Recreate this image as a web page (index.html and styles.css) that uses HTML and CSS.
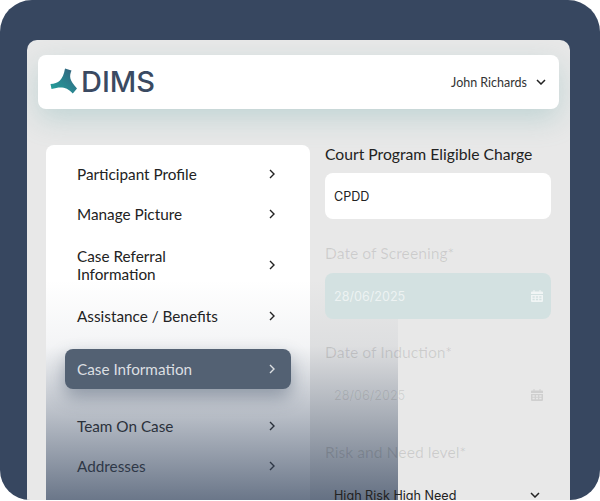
FILE: index.html
```html
<!DOCTYPE html>
<html lang="en">
<head>
<meta charset="utf-8">
<title>DIMS</title>
<link rel="stylesheet" href="styles.css">
</head>
<body>
<div class="frame">
  <div class="card">
    <header class="topbar">
      <div class="brand">
        <svg class="logo" viewBox="0 0 30 30" width="30" height="30" aria-hidden="true">
          <defs>
            <linearGradient id="lg" x1="0" y1="1" x2="1" y2="0">
              <stop offset="0" stop-color="#22a59c"/>
              <stop offset=".55" stop-color="#2b7f8d"/>
              <stop offset="1" stop-color="#375a78"/>
            </linearGradient>
          </defs>
          <path fill="url(#lg)" d="M17 1.500 L23.500 3.500 C21 10 21.500 13 29 21.500 L24.800 26.500 C18.500 19.500 12.500 19.500 3.500 22 L2.500 17 C10.500 16.500 15 13 17 1.500Z"/>
        </svg>
        <span class="wordmark">DIMS</span>
      </div>
      <div class="user">
        <span>John Richards</span>
        <svg class="chev-down" viewBox="0 0 10 6" width="10" height="6" aria-hidden="true"><path d="M1 1l4 4 4-4"/></svg>
      </div>
    </header>
    <main class="content">
      <div class="fade"></div>
      <nav class="sidebar">
        <a class="item">Participant Profile<svg class="chev" viewBox="0 0 6 10" width="6" height="10"><path d="M1 1l4 4-4 4"/></svg></a>
        <a class="item">Manage Picture<svg class="chev" viewBox="0 0 6 10" width="6" height="10"><path d="M1 1l4 4-4 4"/></svg></a>
        <a class="item tall"><span>Case Referral<br>Information</span><svg class="chev" viewBox="0 0 6 10" width="6" height="10"><path d="M1 1l4 4-4 4"/></svg></a>
        <a class="item">Assistance / Benefits<svg class="chev" viewBox="0 0 6 10" width="6" height="10"><path d="M1 1l4 4-4 4"/></svg></a>
        <a class="item active">Case Information<svg class="chev" viewBox="0 0 6 10" width="6" height="10"><path d="M1 1l4 4-4 4"/></svg></a>
        <a class="item after-active">Team On Case<svg class="chev" viewBox="0 0 6 10" width="6" height="10"><path d="M1 1l4 4-4 4"/></svg></a>
        <a class="item">Addresses<svg class="chev" viewBox="0 0 6 10" width="6" height="10"><path d="M1 1l4 4-4 4"/></svg></a>
        <a class="item">Contacts<svg class="chev" viewBox="0 0 6 10" width="6" height="10"><path d="M1 1l4 4-4 4"/></svg></a>
      </nav>
      <form class="form">
        <label class="label first">Court Program Eligible Charge</label>
        <div class="field solid">CPDD</div>
        <label class="label faded">Date of Screening*</label>
        <div class="field teal">28/06/2025
          <svg class="cal" viewBox="0 0 12 12" width="12" height="12" aria-hidden="true"><path d="M0 2.500a1 1 0 0 1 1-1h1.500V0h1v1.500h5V0h1v1.500H11a1 1 0 0 1 1 1V4H0zM0 5h12v6a1 1 0 0 1-1 1H1a1 1 0 0 1-1-1zm1.500 1.200v1.500h2.200V6.200zm3.400 0v1.500h2.200V6.200zm3.400 0v1.500h2.200V6.200zM1.500 8.800v1.500h2.200V8.800zm3.400 0v1.500h2.200V8.800zm3.400 0v1.500h2.200V8.800z" fill-rule="evenodd"/></svg>
        </div>
        <label class="label faded induction">Date of Induction*</label>
        <div class="field plain">28/06/2025
          <svg class="cal" viewBox="0 0 12 12" width="12" height="12" aria-hidden="true"><path d="M0 2.500a1 1 0 0 1 1-1h1.500V0h1v1.500h5V0h1v1.500H11a1 1 0 0 1 1 1V4H0zM0 5h12v6a1 1 0 0 1-1 1H1a1 1 0 0 1-1-1zm1.500 1.200v1.500h2.200V6.200zm3.400 0v1.500h2.200V6.200zm3.400 0v1.500h2.200V6.200zM1.500 8.800v1.500h2.200V8.800zm3.400 0v1.500h2.200V8.800zm3.400 0v1.500h2.200V8.800z" fill-rule="evenodd"/></svg>
        </div>
        <label class="label faded">Risk and Need level*</label>
        <div class="field select">High Risk High Need
          <svg class="chev-down" viewBox="0 0 10 6" width="10" height="6" aria-hidden="true"><path d="M1 1l4 4 4-4"/></svg>
        </div>
      </form>
    </main>
  </div>
</div>
</body>
</html>
```
FILE: styles.css
```css
* { box-sizing: border-box; }
html, body { margin: 0; padding: 0; background: #fff; }
body { width: 600px; height: 501px; overflow: hidden; font-family: "Lato", "Liberation Sans", sans-serif; }
.frame { width: 600px; height: 500px; background: #374760; border-radius: 32px 32px 30px 30px; padding: 40px 30px 0 27px; overflow: hidden; }
.card { height: 460px; background: #e8e8e8; border-radius: 10px 10px 0 0; padding: 15px 11px 0; overflow: hidden; }
.topbar { height: 54px; background: #fff; border-radius: 8px; display: flex; align-items: center; justify-content: space-between; padding: 0 13px 0 10px; box-shadow: 0 10px 28px rgba(110, 170, 170, .32); }
.brand { display: flex; align-items: center; gap: 3px; }
.logo { display: block; }
.wordmark { font-family: "Inter", sans-serif; font-weight: 500; font-size: 29px; line-height: 30px; color: #3a4a62; }
.user { display: flex; align-items: center; gap: 9px; font-size: 12.500px; color: #333; }
.chev-down { fill: none; stroke: #222; stroke-width: 1.500; }
.content { position: relative; display: flex; gap: 15px; padding-left: 8px; margin-top: 36px; height: 355px; }
.fade { position: absolute; left: 8px; top: 135px; width: 352px; bottom: 0; z-index: 2; background: linear-gradient(to bottom, rgba(55,71,96,0) 0%, rgba(55,71,96,.06) 30%, rgba(55,71,96,.36) 62%, rgba(55,71,96,.74) 100%); pointer-events: none; }
.sidebar { width: 264px; height: 355px; background: #fff; border-radius: 8px 8px 0 0; padding: 9px 19px 0; overflow: hidden; flex: none; }
.item { display: flex; align-items: center; justify-content: space-between; height: 40px; padding: 0 16px 1px 12px; font-size: 15.300px; line-height: 18px; color: #222; }
.item .chev { margin-top: 1px; }
.item.tall { height: 62px; }
.item.active { position: relative; z-index: 3; background: #536173; border-radius: 8px; color: #dcdfe2; margin-top: 13px; box-shadow: 0 8px 18px rgba(55,71,96,.42); }
.item.after-active { margin-top: 17px; }
.chev { fill: none; stroke: #222; stroke-width: 1.400; flex: none; }
.active .chev { stroke: #dcdfe2; }
.form { width: 226px; position: relative; z-index: 3; display: flex; flex-direction: column; }
.label { display: block; font-size: 15.700px; line-height: 20px; color: #222; height: 20px; margin-bottom: 9px; }
.label.first { margin-top: -1px; }
.label.faded { color: rgba(0, 0, 0, .12); margin-bottom: 10px; }
.label.induction { margin-bottom: 10px; }
.field { height: 46px; border-radius: 8px; display: flex; align-items: center; justify-content: space-between; padding: 0 8px 0 9px; font-family: "Inter", sans-serif; font-size: 12.600px; flex: none; margin-bottom: 24px; }
.solid { background: #fff; color: #222; margin-bottom: 24px; }
.teal { background: #d3e1e1; color: rgba(255,255,255,.6); margin-bottom: 23px; }
.teal .cal { fill: #f1f5f5; }
.plain { color: rgba(0,0,0,.1); margin-bottom: 24px; }
.plain .cal { fill: #cfcfcf; }
.select { color: #222; padding-right: 11px; }
```
